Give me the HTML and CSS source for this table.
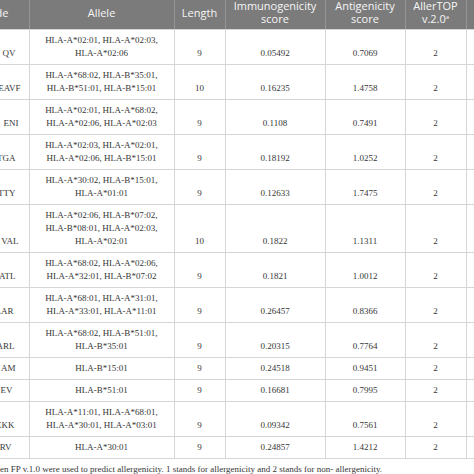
FILE: index.html
```html
<!DOCTYPE html>
<html>
<head>
<meta charset="utf-8">
<link rel="stylesheet" href="styles.css">
</head>
<body>
<div class="frame">
  <table class="data">
    <colgroup>
      <col class="c-pep"><col class="c-allele"><col class="c-len"><col class="c-imm"><col class="c-ant"><col class="c-top"><col class="c-fp">
    </colgroup>
    <thead>
      <tr>
        <th class="h-pep">Peptide</th>
        <th>Allele</th>
        <th>Length</th>
        <th>Immunogenicity<br>score</th>
        <th>Antigenicity<br>score</th>
        <th>AllerTOP<br>v.2.0<sup>a</sup></th>
        <th></th>
      </tr>
    </thead>
    <tbody>
      <tr><td class="pep e16">QV</td><td class="al">HLA-A*02:01, HLA-A*02:03,<br>HLA-A*02:06</td><td>9</td><td>0.05492</td><td>0.7069</td><td>2</td><td></td></tr>
      <tr><td class="pep e21">EAVF</td><td class="al">HLA-A*68:02, HLA-B*35:01,<br>HLA-B*51:01, HLA-B*15:01</td><td>10</td><td>0.16235</td><td>1.4758</td><td>2</td><td></td></tr>
      <tr><td class="pep e19">ENI</td><td class="al">HLA-A*02:01, HLA-A*68:02,<br>HLA-A*02:06, HLA-A*02:03</td><td>9</td><td>0.1108</td><td>0.7491</td><td>2</td><td></td></tr>
      <tr><td class="pep e16">TGA</td><td class="al">HLA-A*02:03, HLA-A*02:01,<br>HLA-A*02:06, HLA-B*15:01</td><td>9</td><td>0.18192</td><td>1.0252</td><td>2</td><td></td></tr>
      <tr><td class="pep e16">TTY</td><td class="al">HLA-A*30:02, HLA-B*15:01,<br>HLA-A*01:01</td><td>9</td><td>0.12633</td><td>1.7475</td><td>2</td><td></td></tr>
      <tr><td class="pep e19">VAL</td><td class="al">HLA-A*02:06, HLA-B*07:02,<br>HLA-B*08:01, HLA-A*02:03,<br>HLA-A*02:01</td><td>10</td><td>0.1822</td><td>1.1311</td><td>2</td><td></td></tr>
      <tr><td class="pep e16">ATL</td><td class="al">HLA-A*68:02, HLA-A*02:06,<br>HLA-A*32:01, HLA-B*07:02</td><td>9</td><td>0.1821</td><td>1.0012</td><td>2</td><td></td></tr>
      <tr><td class="pep e14">LAR</td><td class="al">HLA-A*68:01, HLA-A*31:01,<br>HLA-A*33:01, HLA-A*11:01</td><td>9</td><td>0.26457</td><td>0.8366</td><td>2</td><td></td></tr>
      <tr><td class="pep e15">ARL</td><td class="al">HLA-A*68:02, HLA-B*51:01,<br>HLA-B*35:01</td><td>9</td><td>0.20315</td><td>0.7764</td><td>2</td><td></td></tr>
      <tr><td class="pep e16">AM</td><td class="al">HLA-B*15:01</td><td>9</td><td>0.24518</td><td>0.9451</td><td>2</td><td></td></tr>
      <tr><td class="pep e13">EV</td><td class="al">HLA-B*51:01</td><td>9</td><td>0.16681</td><td>0.7995</td><td>2</td><td></td></tr>
      <tr><td class="pep e15">EKK</td><td class="al">HLA-A*11:01, HLA-A*68:01,<br>HLA-A*30:01, HLA-A*03:01</td><td>9</td><td>0.09342</td><td>0.7561</td><td>2</td><td></td></tr>
      <tr><td class="pep e12">RV</td><td class="al">HLA-A*30:01</td><td>9</td><td>0.24857</td><td>1.4212</td><td>2</td><td></td></tr>
    </tbody>
  </table>
</div>
<p class="note">en FP v.1.0 were used to predict allergenicity. 1 stands for allergenicity and 2 stands for non- allergenicity.</p>
</body>
</html>
```

FILE: styles.css
```css
html, body {
  margin: 0;
  padding: 0;
  width: 474px;
  height: 474px;
  overflow: hidden;
  background: #ffffff;
}

.frame {
  margin: -5px 0 0 -59px;
}

.data {
  border-collapse: collapse;
  table-layout: fixed;
  width: 585px;
  font-family: "Liberation Serif", "Times New Roman", serif;
  font-size: 9px;
  line-height: 13px;
  color: #363636;
}

.c-pep { width: 88px; }
.c-allele { width: 145px; }
.c-len { width: 51px; }
.c-imm { width: 100px; }
.c-ant { width: 80px; }
.c-top { width: 61px; }
.c-fp { width: 60px; }

.data th {
  background: #7b7b7b;
  color: #f6f6f6;
  font-family: "Open Sans", "Liberation Sans", sans-serif;
  font-weight: normal;
  font-size: 11px;
  line-height: 13px;
  padding: 4px 2px;
  height: 26px;
  text-align: center;
  vertical-align: middle;
  border-right: 1px solid #959595;
  border-bottom: 1px solid #d6d6d6;
  white-space: nowrap;
}

.data th sup {
  font-size: 6px;
  line-height: 0;
  vertical-align: 4px;
}

.data th.h-pep {
  text-align: right;
  padding-right: 20px;
}

.data td {
  padding: 4px 2px;
  text-align: center;
  vertical-align: bottom;
  border: 1px solid #d6d6d6;
  border-top: none;
  white-space: nowrap;
}

.data td.al {
  vertical-align: top;
}

.data td.pep {
  text-align: right;
  overflow: hidden;
  border-left: none;
}

.data td.e12 { padding-right: 17px; }
.data td.e13 { padding-right: 16px; }
.data td.e14 { padding-right: 15px; }
.data td.e15 { padding-right: 14px; }
.data td.e16 { padding-right: 13px; }
.data td.e19 { padding-right: 10px; }
.data td.e21 { padding-right: 8px; }

.note {
  margin: 4px 0 0 0;
  font-family: "Liberation Serif", "Times New Roman", serif;
  font-size: 9px;
  line-height: 13px;
  color: #363636;
  white-space: nowrap;
}
```
